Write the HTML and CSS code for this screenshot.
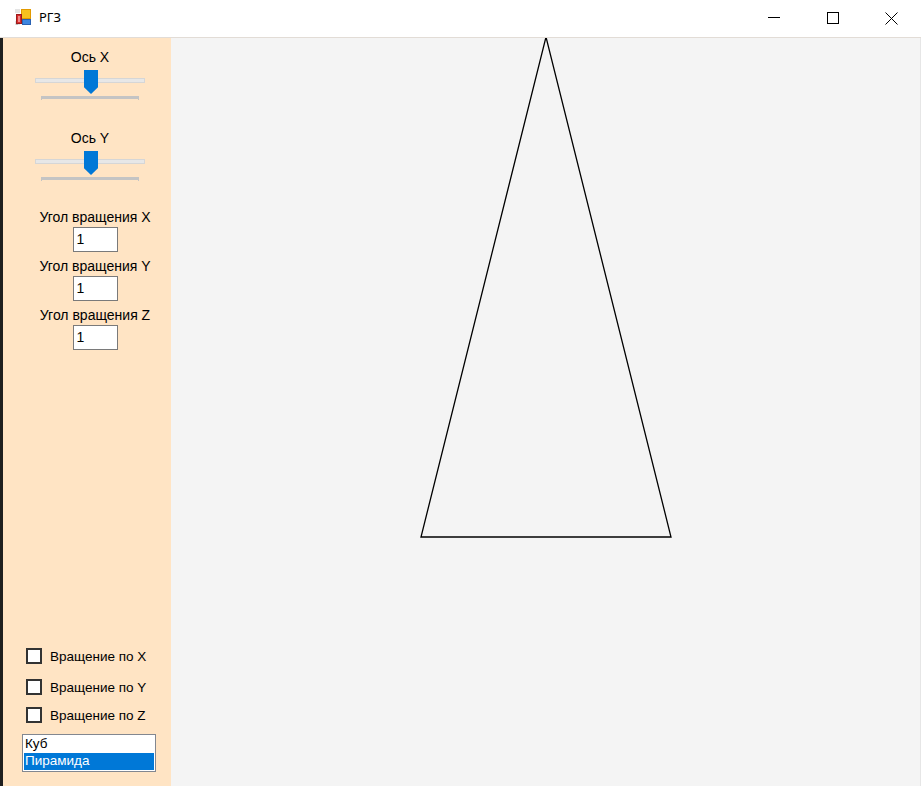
FILE: index.html
```html
<!DOCTYPE html>
<html lang="ru">
<head>
<meta charset="utf-8">
<title>РГЗ</title>
<link rel="stylesheet" href="styles.css">
</head>
<body>
<div class="window">
  <header class="titlebar">
    <div class="title">
      <svg class="app-icon" width="16" height="16" viewBox="0 0 16 16">
        <rect x="0" y="0" width="5" height="4" fill="#e4e4e4"/>
        <rect x="0" y="12" width="5" height="4" fill="#e4e4e4"/>
        <rect x="6.5" y="0.5" width="9" height="9" fill="#f7c21e" stroke="#e29a00"/>
        <rect x="1.5" y="5.5" width="5" height="9" fill="#d92b2b" stroke="#9c1b1b"/>
        <rect x="3" y="7" width="2" height="6" fill="#f08a8a"/>
        <rect x="7.5" y="10.5" width="8" height="5" fill="#3d86e0" stroke="#2a62b3"/>
        <rect x="1" y="15" width="2" height="1" fill="#bbb"/>
      </svg>
      <span class="title-text">РГЗ</span>
    </div>
    <div class="controls">
      <div class="ctl">
        <svg width="12" height="12" viewBox="0 0 12 12"><path d="M0 5.5H12" stroke="#000" stroke-width="1"/></svg>
      </div>
      <div class="ctl">
        <svg width="12" height="12" viewBox="0 0 12 12"><rect x="0.5" y="0.5" width="11" height="11" fill="none" stroke="#000" stroke-width="1"/></svg>
      </div>
      <div class="ctl">
        <svg width="13" height="13" viewBox="0 0 13 13"><path d="M0.5 0.5L12.5 12.5M12.5 0.5L0.5 12.5" stroke="#000" stroke-width="1"/></svg>
      </div>
    </div>
  </header>
  <main class="client">
    <div class="edge"></div>
    <aside class="panel">
      <div class="slider-group">
        <div class="label">Ось X</div>
        <div class="slider">
          <div class="track"></div>
          <div class="thumb"></div>
          <div class="ticks"></div>
        </div>
      </div>
      <div class="slider-group second">
        <div class="label">Ось Y</div>
        <div class="slider">
          <div class="track"></div>
          <div class="thumb"></div>
          <div class="ticks"></div>
        </div>
      </div>
      <div class="angles">
        <div class="angle">
          <div class="label">Угол вращения X</div>
          <div class="textbox">1</div>
        </div>
        <div class="angle">
          <div class="label">Угол вращения Y</div>
          <div class="textbox">1</div>
        </div>
        <div class="angle">
          <div class="label">Угол вращения Z</div>
          <div class="textbox">1</div>
        </div>
      </div>
      <div class="bottom">
        <label class="check check-x"><span class="box"></span><span>Вращение по X</span></label>
        <label class="check check-y"><span class="box"></span><span>Вращение по Y</span></label>
        <label class="check check-z"><span class="box"></span><span>Вращение по Z</span></label>
        <div class="listbox">
          <div class="item">Куб</div>
          <div class="item selected">Пирамида</div>
        </div>
      </div>
    </aside>
    <section class="canvas">
      <svg class="drawing" width="750" height="748" viewBox="0 0 750 748">
        <polygon points="375,-1 250,499 500,499" fill="none" stroke="#000" stroke-width="1.3"/>
      </svg>
    </section>
  </main>
</div>
</body>
</html>
```

FILE: styles.css
```css
* { box-sizing: border-box; }
html, body {
  margin: 0;
  padding: 0;
  width: 921px;
  height: 786px;
  overflow: hidden;
  background: #ffffff;
}
.window {
  width: 921px;
  height: 786px;
  display: flex;
  flex-direction: column;
  font-family: "Liberation Sans", Arial, sans-serif;
  color: #000;
}
.titlebar {
  height: 38px;
  flex: none;
  display: flex;
  align-items: stretch;
  justify-content: space-between;
  background: #ffffff;
  border-bottom: 1px solid #e2dcd6;
}
.title {
  display: flex;
  align-items: center;
  padding-left: 15px;
  padding-bottom: 3px;
}
.app-icon { display: block; }
.title-text {
  margin-left: 8px;
  font-family: "Noto Sans", "Open Sans", sans-serif;
  font-size: 13px;
  color: #000;
}
.controls {
  display: flex;
}
.ctl {
  width: 59px;
  display: flex;
  align-items: center;
  justify-content: center;
  padding-bottom: 1px;
}
.ctl svg { display: block; }

.client {
  flex: 1;
  display: flex;
  min-height: 0;
}
.edge {
  width: 3px;
  flex: none;
  background: #1f1f1f;
}
.panel {
  width: 168px;
  flex: none;
  background: #ffe4c4;
  display: flex;
  flex-direction: column;
  font-size: 14px;
}
.label {
  height: 16px;
  line-height: 16px;
  text-align: center;
  white-space: nowrap;
  color: #000;
}
.slider-group {
  padding-top: 11px;
}
.slider-group .label {
  padding-left: 6px;
}
.slider-group.second {
  padding-top: 30px;
}
.slider {
  position: relative;
  margin: 5px 0 0 32px;
  width: 110px;
  height: 30px;
}
.track {
  position: absolute;
  left: 0;
  top: 8px;
  width: 110px;
  height: 5px;
  background: #e7e7e7;
  border: 1px solid #d6d6d6;
}
.thumb {
  position: absolute;
  left: 49px;
  top: 0;
  width: 14px;
  height: 24px;
  background: #0078d7;
  clip-path: polygon(0 0, 100% 0, 100% 72%, 50% 100%, 0 72%);
}
.ticks {
  position: absolute;
  left: 6px;
  top: 26px;
  width: 98px;
  height: 4px;
  border-top: 3px solid #c4c4c4;
  border-left: 1px solid #c4c4c4;
  border-right: 1px solid #c4c4c4;
}
.angles {
  padding-top: 28px;
  padding-left: 16px;
  display: flex;
  flex-direction: column;
  gap: 6px;
}
.angle {
  display: flex;
  flex-direction: column;
  align-items: center;
}
.textbox {
  margin-top: 2px;
  width: 45px;
  height: 25px;
  background: #fff;
  border: 1px solid #7a7a7a;
  padding-left: 3px;
  line-height: 22px;
  font-size: 14px;
}
.bottom {
  margin-top: auto;
  padding: 0 0 14px 19px;
  display: flex;
  flex-direction: column;
}
.check {
  display: flex;
  align-items: center;
  height: 16px;
  font-size: 13.5px;
  white-space: nowrap;
}
.check-x { margin-bottom: 15px; }
.check-y { margin-bottom: 12px; }
.check-z { margin-bottom: 11px; }
.box {
  width: 16px;
  height: 16px;
  flex: none;
  background: #fff;
  border: 2px solid #333;
  margin-left: 4px;
  margin-right: 8px;
}
.listbox {
  width: 134px;
  height: 38px;
  background: #fff;
  border: 1px solid #828790;
  padding: 1px;
}
.item {
  height: 17px;
  line-height: 16px;
  padding-left: 1px;
  font-size: 13.5px;
}
.item.selected {
  background: #0078d7;
  color: #fff;
}
.canvas {
  flex: 1;
  background: #f4f4f4;
  overflow: hidden;
  border-right: 1px solid #e6e6e6;
}
.drawing { display: block; }
```
